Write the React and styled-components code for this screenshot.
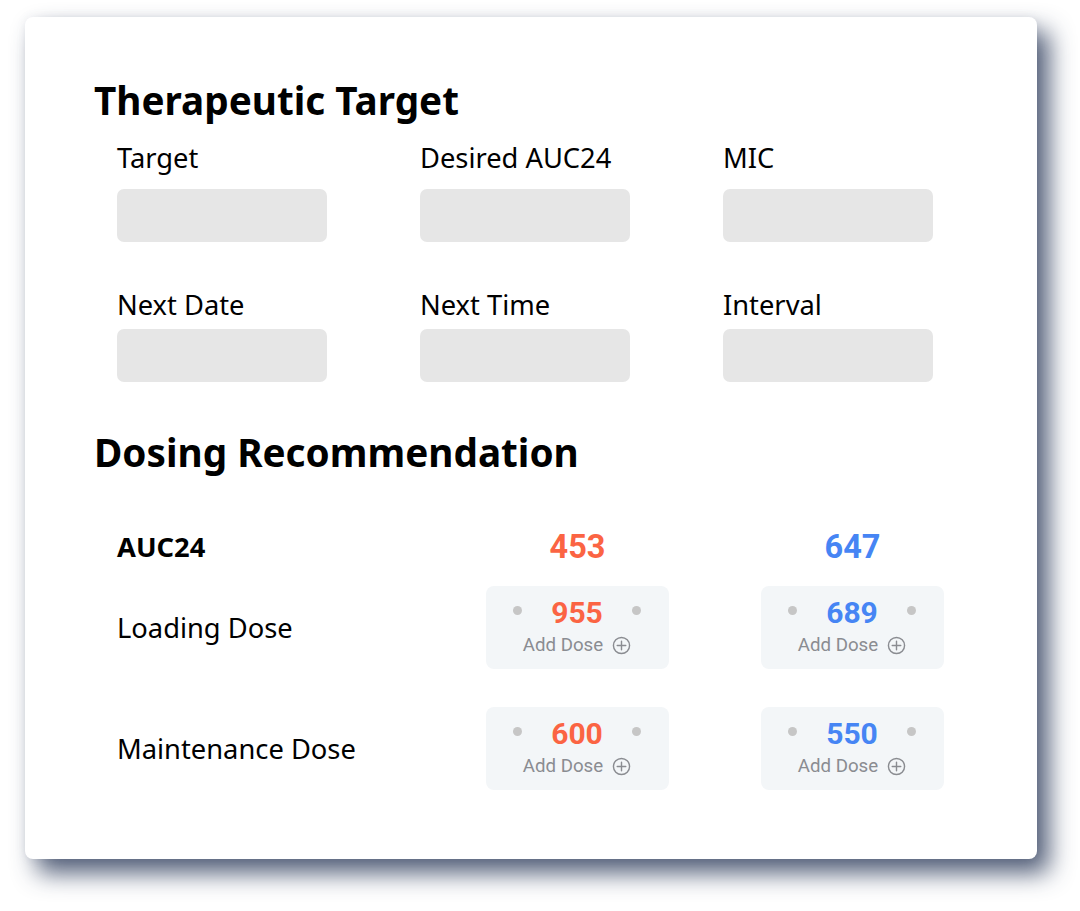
import React from "react";
import styled, { createGlobalStyle } from "styled-components";

// GLOBAL
const GlobalStyle = createGlobalStyle`
  html, body {
    margin: 0;
    padding: 0;
    background: #ffffff;
  }
  body {
    font-family: "Noto Sans", "Open Sans", sans-serif;
    color: #000;
  }
`;

// STYLE
const Page = styled.div`
  padding: 17px 0 0 25px;
  width: 1080px;
  height: 911px;
  box-sizing: border-box;
`;

const Card = styled.section`
  width: 1012px;
  height: 842px;
  box-sizing: border-box;
  padding: 58px 0 0 69px;
  background: #ffffff;
  border-radius: 8px;
  box-shadow: 12px 14px 24px rgba(52, 66, 96, 0.85),
    0 0 8px rgba(120, 130, 160, 0.12);
`;

const Title = styled.h1`
  margin: 0;
  font-size: 38.7px;
  line-height: 50px;
  font-weight: 700;
`;

const FieldGrid = styled.div`
  margin: 16px 0 0 23px;
  display: grid;
  grid-template-columns: repeat(3, 210px);
  column-gap: 93px;
  row-gap: 46px;
`;

const Field = styled.div`
  display: flex;
  flex-direction: column;
  gap: ${(p) => p.$gap}px;
`;

const Label = styled.label`
  font-size: 27.3px;
  line-height: 34px;
  font-weight: 400;
`;

const InputBox = styled.div`
  height: 53px;
  border-radius: 7px;
  background: #e6e6e6;
`;

const SectionTitle = styled(Title)`
  margin-top: 45px;
`;

const DoseRow = styled.div`
  margin-left: 23px;
  display: grid;
  grid-template-columns: 277px 183px 183px;
  grid-auto-rows: ${(p) => p.$height}px;
  column-gap: 92px;
  row-gap: 38px;
  align-items: center;
`;

const AucRow = styled(DoseRow)`
  margin-top: 50px;
  margin-bottom: 19px;
`;

const RowLabel = styled.div`
  font-size: 27.3px;
  font-weight: ${(p) => (p.$bold ? 700 : 400)};
  line-height: 34px;
`;

const Value = styled.div`
  font-family: Roboto, "Liberation Sans", sans-serif;
  font-weight: 700;
  font-size: ${(p) => (p.$small ? "30px" : "32.5px")};
  line-height: 34px;
  color: ${(p) => p.$color};
  text-align: center;
`;

const DoseCard = styled.div`
  height: 83px;
  box-sizing: border-box;
  padding: 11px 28px 0 27px;
  border-radius: 8px;
  background: #f3f6f8;
  display: flex;
  flex-direction: column;
  align-items: stretch;
`;

const DoseTop = styled.div`
  display: flex;
  justify-content: space-between;
  align-items: center;
  height: 32px;
`;

const Dot = styled.span`
  width: 9px;
  height: 9px;
  border-radius: 50%;
  background: #c6c6c6;
  margin-top: -6px;
`;

const AddDose = styled.button`
  margin: 4px auto 0;
  padding: 0;
  border: 0;
  background: none;
  display: inline-flex;
  align-items: center;
  gap: 9px;
  font-family: Roboto, "Liberation Sans", sans-serif;
  font-size: 18.7px;
  line-height: 24px;
  color: #8a8c91;
  cursor: pointer;

  svg {
    width: 19px;
    height: 19px;
  }
`;

const ORANGE = "#fb6443";
const BLUE = "#4685f4";

const PlusCircle = () => (
  <svg viewBox="0 0 20 20" fill="none" stroke="#8a8c91" strokeWidth="1.5">
    <circle cx="10" cy="10" r="8.5" />
    <path d="M10 5.5v9M5.5 10h9" strokeLinecap="round" />
  </svg>
);

const DoseBox = ({ value, color }) => (
  <DoseCard>
    <DoseTop>
      <Dot />
      <Value $color={color} $small>{value}</Value>
      <Dot />
    </DoseTop>
    <AddDose>
      Add Dose <PlusCircle />
    </AddDose>
  </DoseCard>
);

const fields = ["Target", "Desired AUC24", "MIC", "Next Date", "Next Time", "Interval"];

// COMPONENT
const App = () => {
  return (
    <Page>
      <GlobalStyle />
      <Card>
        <Title>Therapeutic Target</Title>
        <FieldGrid>
          {fields.map((f, i) => (
            <Field key={f} $gap={i < 3 ? 14 : 7}>
              <Label>{f}</Label>
              <InputBox />
            </Field>
          ))}
        </FieldGrid>

        <SectionTitle>Dosing Recommendation</SectionTitle>
        <AucRow $height={40}>
          <RowLabel $bold>AUC24</RowLabel>
          <Value $color={ORANGE}>453</Value>
          <Value $color={BLUE}>647</Value>
        </AucRow>
        <DoseRow $height={83}>
          <RowLabel>Loading Dose</RowLabel>
          <DoseBox value="955" color={ORANGE} />
          <DoseBox value="689" color={BLUE} />

          <RowLabel>Maintenance Dose</RowLabel>
          <DoseBox value="600" color={ORANGE} />
          <DoseBox value="550" color={BLUE} />
        </DoseRow>
      </Card>
    </Page>
  );
};

export default App;
